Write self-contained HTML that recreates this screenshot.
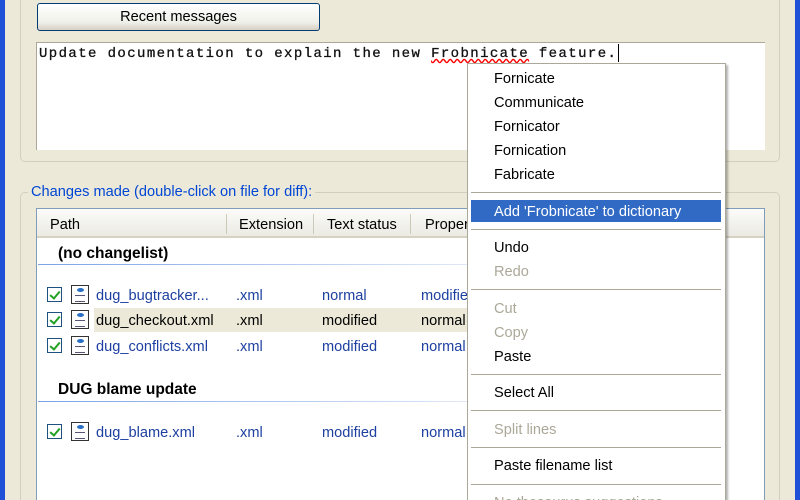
<!DOCTYPE html>
<html style="overflow:hidden;width:800px;height:500px"><head><style>
body{margin:0;width:800px;height:500px;overflow:hidden;background:#ece9d8;position:relative;font-family:"Liberation Sans",sans-serif;font-size:14.6px;color:#000}
.a{position:absolute;white-space:nowrap}
.mi{position:absolute;left:494px;line-height:20px;margin-top:1px}
.g{color:#aca899}
.sep{position:absolute;left:471px;width:250px;height:0;border-top:1px solid #aca899;border-bottom:1px solid #fff}
.b{color:#1c3fa0}
.cb{position:absolute;left:47px;width:15px;height:15px;border:1px solid #1c5180;background:#fff;box-sizing:border-box}
.cb:after{content:"";position:absolute;left:4px;top:1px;width:4px;height:8px;border:solid #21a121;border-width:0 2px 2px 0;transform:rotate(40deg)}
.ic{position:absolute;left:71px;width:18px;height:19px;border:1px solid #333;background:#fff;box-sizing:border-box}
.ic:before{content:"";position:absolute;left:5px;top:2px;width:7px;height:4px;border-radius:50%;background:#2a6fc6}
.ic:after{content:"";position:absolute;left:3px;top:9px;width:10px;height:5px;border-top:1px solid #557;border-bottom:1px solid #557}
</style></head><body>
<div class="a" style="left:0;top:0;width:5px;height:500px;background:#1e50d8"></div>
<div class="a" style="left:795px;top:0;width:5px;height:500px;background:#1e50d8"></div>
<div class="a" style="left:20px;top:-10px;width:760px;height:172px;border:1px solid #d0d0bf;border-radius:5px;box-sizing:border-box"></div>
<div class="a" style="left:37px;top:3px;width:283px;height:28px;border:1px solid #003c74;border-radius:3px;background:linear-gradient(#fff,#f0f0ea 70%,#d6d0c5);box-sizing:border-box;text-align:center;line-height:27px">Recent messages</div>
<div class="a" style="left:36px;top:42px;width:729px;height:108px;background:#fff;border-left:1px solid #aca899;border-top:1px solid #aca899;box-sizing:border-box"></div>
<div class="a" style="left:39px;top:46px;font-family:'Liberation Mono',monospace;font-size:14px;letter-spacing:1.4px;color:#111;-webkit-text-stroke:0.3px #111">Update documentation to explain the new <span style="text-decoration:underline wavy red">Frobnicate</span> feature.</div>
<div class="a" style="left:618px;top:44px;width:1px;height:18px;background:#000"></div>
<div class="a" style="left:20px;top:192px;width:760px;height:320px;border:1px solid #d0d0bf;border-radius:5px;box-sizing:border-box"></div>
<div class="a b" style="left:28px;top:184px;background:#ece9d8;padding:0 3px;color:#0046d5">Changes made (double-click on file for diff):</div>
<div class="a" style="left:36px;top:208px;width:729px;height:300px;background:#fff;border:1px solid #7f9db9;box-sizing:border-box"></div>
<div class="a" style="left:37px;top:209px;width:727px;height:29px;background:linear-gradient(#fbfbf9,#ebeae3);border-bottom:2px solid #d6d2c2;box-sizing:border-box"></div>
<div class="a" style="left:50px;top:217px">Path</div>
<div class="a" style="left:226px;top:214px;width:1px;height:20px;background:#ccc9b8"></div>
<div class="a" style="left:239px;top:217px">Extension</div>
<div class="a" style="left:313px;top:214px;width:1px;height:20px;background:#ccc9b8"></div>
<div class="a" style="left:327px;top:217px">Text status</div>
<div class="a" style="left:410px;top:214px;width:1px;height:20px;background:#ccc9b8"></div>
<div class="a" style="left:425px;top:217px">Properties</div>
<div class="a" style="left:58px;top:245px;font-weight:bold;font-size:15.5px">(no changelist)</div>
<div class="a" style="left:38px;top:264px;width:430px;height:1px;background:linear-gradient(90deg,#7ba2e7,#dfe8f7)"></div>
<div class="a" style="left:94px;top:308px;width:376px;height:24px;background:#ece9d8"></div>
<div class="cb" style="top:287px"></div><div class="ic" style="top:285px"></div>
<div class="a b" style="left:96px;top:288px">dug_bugtracker...</div><div class="a b" style="left:236px;top:288px">.xml</div><div class="a b" style="left:322px;top:288px">normal</div><div class="a b" style="left:421px;top:288px">modified</div>
<div class="cb" style="top:312px"></div><div class="ic" style="top:310px"></div>
<div class="a" style="left:96px;top:313px">dug_checkout.xml</div><div class="a" style="left:236px;top:313px">.xml</div><div class="a" style="left:322px;top:313px">modified</div><div class="a" style="left:421px;top:313px">normal</div>
<div class="cb" style="top:338px"></div><div class="ic" style="top:336px"></div>
<div class="a b" style="left:96px;top:339px">dug_conflicts.xml</div><div class="a b" style="left:236px;top:339px">.xml</div><div class="a b" style="left:322px;top:339px">modified</div><div class="a b" style="left:421px;top:339px">normal</div>
<div class="a" style="left:58px;top:381px;font-weight:bold;font-size:15.5px">DUG blame update</div>
<div class="a" style="left:38px;top:401px;width:430px;height:1px;background:linear-gradient(90deg,#7ba2e7,#dfe8f7)"></div>
<div class="cb" style="top:424px"></div><div class="ic" style="top:422px"></div>
<div class="a b" style="left:96px;top:425px">dug_blame.xml</div><div class="a b" style="left:236px;top:425px">.xml</div><div class="a b" style="left:322px;top:425px">modified</div><div class="a b" style="left:421px;top:425px">normal</div>
<div class="a" style="left:467px;top:63px;width:259px;height:437px;background:#fff;border:1px solid #aca899;border-bottom:none;box-shadow:2px 2px 2px rgba(0,0,0,.3);box-sizing:border-box"></div>
<div class="mi" style="top:68px">Fornicate</div>
<div class="mi" style="top:92px">Communicate</div>
<div class="mi" style="top:116px">Fornicator</div>
<div class="mi" style="top:140px">Fornication</div>
<div class="mi" style="top:164px">Fabricate</div>
<div class="sep" style="top:192px"></div>
<div class="a" style="left:471px;top:200px;width:250px;height:22px;background:#316ac5"></div>
<div class="mi" style="top:201px;color:#fff">Add 'Frobnicate' to dictionary</div>
<div class="sep" style="top:229px"></div>
<div class="mi" style="top:237px">Undo</div>
<div class="mi g" style="top:261px">Redo</div>
<div class="sep" style="top:289px"></div>
<div class="mi g" style="top:298px">Cut</div>
<div class="mi g" style="top:322px">Copy</div>
<div class="mi" style="top:346px">Paste</div>
<div class="sep" style="top:374px"></div>
<div class="mi" style="top:382px">Select All</div>
<div class="sep" style="top:410px"></div>
<div class="mi g" style="top:419px">Split lines</div>
<div class="sep" style="top:447px"></div>
<div class="mi" style="top:455px">Paste filename list</div>
<div class="sep" style="top:484px"></div>
<div class="mi g" style="top:492px">No thesaurus suggestions</div>
</body></html>
